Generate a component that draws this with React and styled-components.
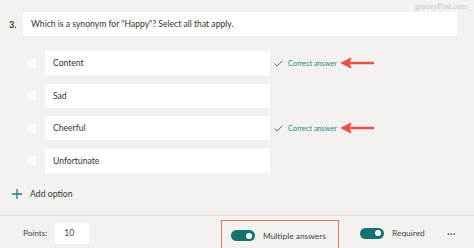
import React from 'react'
import styled, { createGlobalStyle } from 'styled-components'

const GlobalStyle = createGlobalStyle`
    html, body {
        margin: 0;
        padding: 0;
        background: #f3f2f1;
    }
    body {
        font-family: Lato, "Open Sans", sans-serif;
        color: #333;
    }
`

const options = [
    { id: 1, text: 'Content', correct: true },
    { id: 2, text: 'Sad', correct: false },
    { id: 3, text: 'Cheerful', correct: true },
    { id: 4, text: 'Unfortunate', correct: false },
]

function Toggle() {
    return (
        <Track>
            <Knob />
        </Track>
    )
}

function Arrow() {
    return (
        <svg width="34" height="12" viewBox="0 0 34 12">
            <path d="M33 6 H9" stroke="#e8524d" strokeWidth="2.6" strokeLinecap="round" />
            <path d="M1 6 L11 1 L9 6 L11 11 Z" fill="#e8524d" stroke="#e8524d" strokeWidth="1" strokeLinejoin="round" />
        </svg>
    )
}

function App() {
    const showOptions = options.map(item => (
        <OptionRow key={item.id}>
            <Checkbox />
            <OptionBox>{item.text}</OptionBox>
            {item.correct &&
                <Correct>
                    <svg width="9" height="7" viewBox="0 0 9 7">
                        <path d="M0.6 3.6 L3.2 6 L8.4 0.7" fill="none" stroke="#4a6b6b" strokeWidth="1" />
                    </svg>
                    <CorrectText>Correct answer</CorrectText>
                    <Arrow />
                </Correct>}
        </OptionRow>
    ))

    return (
        <Page>
            <GlobalStyle />
            <Watermark>groovyPost.com</Watermark>
            <QuestionRow>
                <Number>3.</Number>
                <QuestionCard>Which is a synonym for "Happy"? Select all that apply.</QuestionCard>
            </QuestionRow>
            <OptionList>{showOptions}</OptionList>
            <AddOption>
                <svg width="10" height="10" viewBox="0 0 10 10">
                    <path d="M5 0 V10 M0 5 H10" stroke="#1f7f7f" strokeWidth="1.3" />
                </svg>
                <span>Add option</span>
            </AddOption>
            <Footer>
                <Points>
                    <span>Points:</span>
                    <PointsInput>10</PointsInput>
                </Points>
                <Setting $highlight>
                    <Toggle />
                    <span>Multiple answers</span>
                </Setting>
                <Setting>
                    <Toggle />
                    <span>Required</span>
                </Setting>
                <More>···</More>
            </Footer>
        </Page>
    )
}

export default App

const Page = styled.div`
    position: relative;
    width: 474px;
    height: 248px;
    overflow: hidden;
    background: #f3f2f1;
    padding-top: 12px;
    box-sizing: border-box;
`

const Watermark = styled.div`
    position: absolute;
    top: 2px;
    right: 7px;
    font-family: "Liberation Serif", serif;
    font-size: 8px;
    color: #c4c4c4;
`

const QuestionRow = styled.div`
    display: flex;
    align-items: center;
`

const Number = styled.div`
    width: 14px;
    padding-left: 9px;
    font-size: 9px;
    font-weight: 700;
`

const QuestionCard = styled.div`
    width: 426px;
    height: 24px;
    background: #fff;
    display: flex;
    align-items: center;
    padding-left: 8px;
    font-size: 8.6px;
`

const OptionList = styled.div`
    display: flex;
    flex-direction: column;
    gap: 8.5px;
    margin-top: 15px;
    padding-left: 27px;
`

const OptionRow = styled.div`
    display: flex;
    align-items: center;
    height: 24px;
`

const Checkbox = styled.div`
    width: 9px;
    height: 9px;
    background: #fbfbfb;
    border-radius: 1px;
    margin-right: 9px;
`

const OptionBox = styled.div`
    width: 217px;
    height: 24px;
    background: #fff;
    display: flex;
    align-items: center;
    padding-left: 8px;
    font-size: 8.6px;
`

const Correct = styled.div`
    display: flex;
    align-items: center;
    margin-left: 4px;
`

const CorrectText = styled.span`
    font-size: 7.3px;
    color: #2b8585;
    margin-left: 5px;
    margin-right: 3px;
`

const AddOption = styled.div`
    display: flex;
    align-items: center;
    gap: 8px;
    margin-top: 14px;
    padding-left: 12px;
    height: 14px;
    font-size: 8.7px;
`

const Footer = styled.div`
    display: flex;
    align-items: center;
    margin-top: 14px;
    height: 34px;
    border-top: 1px solid #dcdcdc;
    padding-top: 2px;
    box-sizing: border-box;
`

const Points = styled.div`
    display: flex;
    align-items: center;
    gap: 8px;
    padding-left: 23px;
    width: 198px;
    font-size: 8.2px;
    color: #444;
`

const PointsInput = styled.div`
    width: 25px;
    height: 21px;
    background: #fff;
    display: flex;
    align-items: center;
    padding-left: 9px;
    font-size: 8.6px;
`

const Setting = styled.div`
    display: flex;
    align-items: center;
    gap: 8px;
    height: 30px;
    box-sizing: border-box;
    padding-left: ${p => (p.$highlight ? '9px' : '0')};
    width: ${p => (p.$highlight ? '118px' : '85px')};
    border: ${p => (p.$highlight ? '1.5px solid #e2766e' : 'none')};
    border-bottom: none;
    margin-top: ${p => (p.$highlight ? '4px' : '0')};
    margin-right: ${p => (p.$highlight ? '21px' : '0')};
    font-size: 8.4px;
    color: #444;
`

const Track = styled.div`
    width: 24px;
    height: 11px;
    border-radius: 6px;
    background: #16726f;
    display: flex;
    align-items: center;
    justify-content: flex-end;
    padding-right: 3px;
    box-sizing: border-box;
`

const Knob = styled.div`
    width: 6px;
    height: 6px;
    border-radius: 50%;
    background: #fff;
`

const More = styled.div`
    margin-left: 2px;
    font-size: 11px;
    color: #555;
`
